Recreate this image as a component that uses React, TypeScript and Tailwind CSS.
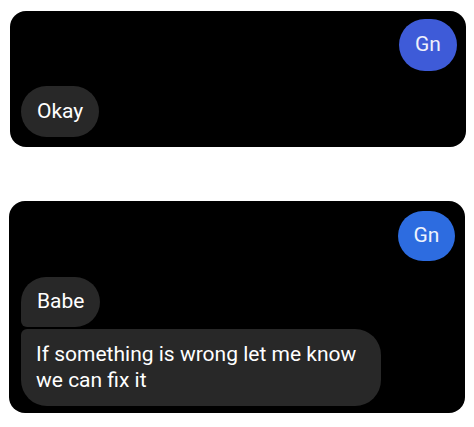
export default function App() {
  return (
    <div className="w-[474px] h-[427px] bg-white font-['Roboto',sans-serif] overflow-hidden">
      {/* first chat */}
      <div className="ml-[10px] mt-[11px] w-[456px] h-[136px] rounded-[16px] bg-black pt-2 pl-[11px] pr-[9px] flex flex-col">
        <div className="flex justify-end">
          <div className="h-[52px] w-[58px] rounded-full bg-[#3e5bd8] text-[#eef0fb] text-[21px] flex items-center justify-center">
            Gn
          </div>
        </div>
        <div className="mt-[15px] flex">
          <div className="h-[51px] px-[16px] rounded-full bg-[#282828] text-white text-[21px] flex items-center">
            Okay
          </div>
        </div>
      </div>

      {/* second chat */}
      <div className="ml-[9px] mt-[54px] w-[456px] h-[212px] rounded-[16px] bg-black pt-[10px] pl-[12px] pr-[10px] flex flex-col">
        <div className="flex justify-end">
          <div className="h-[50px] w-[57px] rounded-full bg-[#2d6ce0] text-[#eef3fd] text-[21px] flex items-center justify-center">
            Gn
          </div>
        </div>
        <div className="mt-[16px] flex flex-col items-start gap-[2px]">
          <div className="h-[50px] px-[16px] rounded-[25px] rounded-bl-[6px] bg-[#282828] text-white text-[21px] flex items-center">
            Babe
          </div>
          <div className="w-[360px] h-[77px] px-[15px] py-[12px] rounded-[26px] rounded-tl-[6px] bg-[#282828] text-white text-[21px] leading-[26px]">
            If something is wrong let me know we can fix it
          </div>
        </div>
      </div>
    </div>
  );
}
